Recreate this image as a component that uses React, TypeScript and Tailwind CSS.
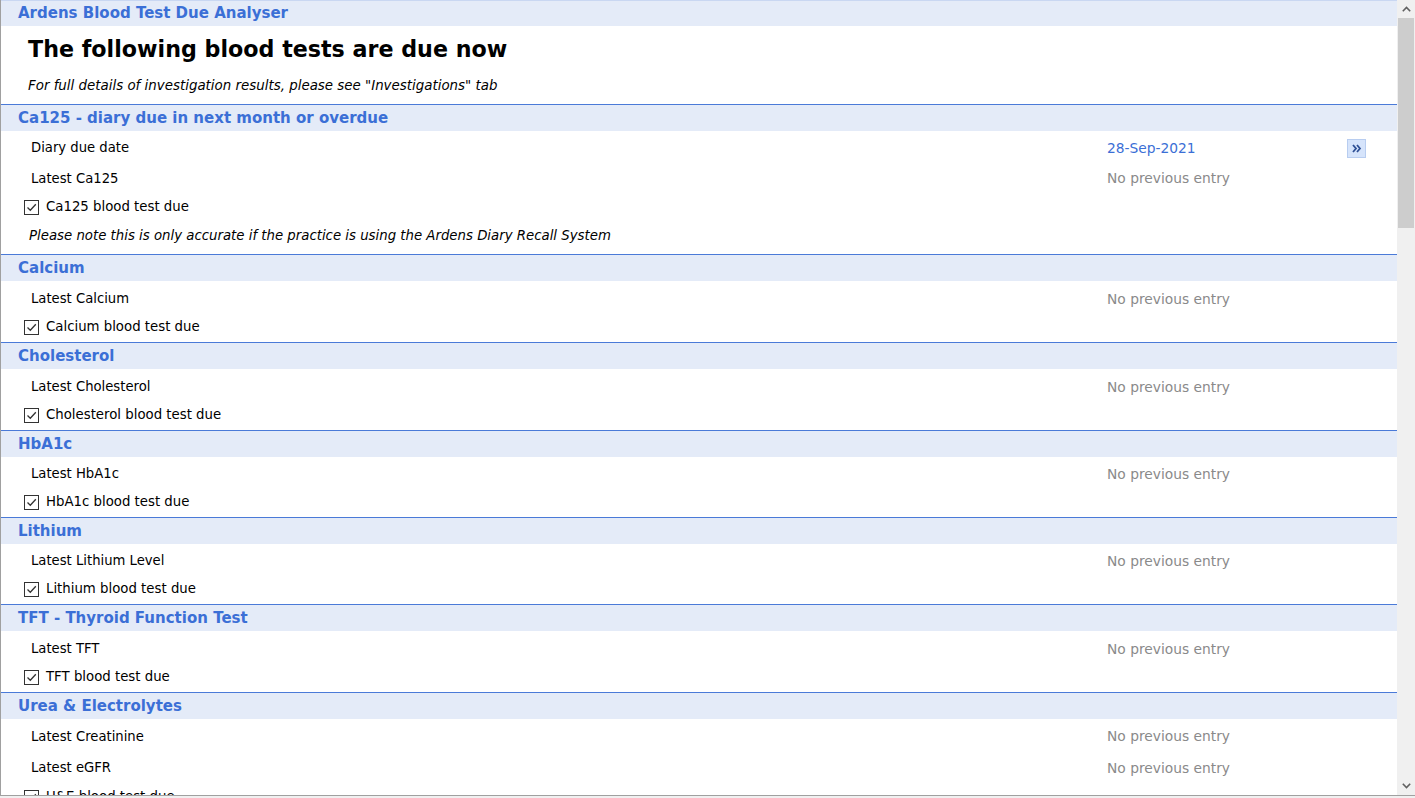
import React from 'react'

// Ardens Blood Test Due Analyser – read-only summary panel

type Row =
  | { kind: 'value'; label: string; value: string; date?: boolean; jump?: boolean; h?: string }
  | { kind: 'check'; label: string }
  | { kind: 'note'; label: string }

const sections: { title: string; pt?: string; rows: Row[] }[] = [
  {
    title: 'Ca125 - diary due in next month or overdue',
    rows: [
      { kind: 'value', label: 'Diary due date', value: '28-Sep-2021', date: true, jump: true },
      { kind: 'value', label: 'Latest Ca125', value: 'No previous entry', h: 'h-[31px]' },
      { kind: 'check', label: 'Ca125 blood test due' },
      { kind: 'note', label: 'Please note this is only accurate if the practice is using the Ardens Diary Recall System' },
    ],
  },
  {
    title: 'Calcium',
    pt: 'pt-[3px]',
    rows: [
      { kind: 'value', label: 'Latest Calcium', value: 'No previous entry' },
      { kind: 'check', label: 'Calcium blood test due' },
    ],
  },
  {
    title: 'Cholesterol',
    pt: 'pt-[3px]',
    rows: [
      { kind: 'value', label: 'Latest Cholesterol', value: 'No previous entry' },
      { kind: 'check', label: 'Cholesterol blood test due' },
    ],
  },
  {
    title: 'HbA1c',
    rows: [
      { kind: 'value', label: 'Latest HbA1c', value: 'No previous entry' },
      { kind: 'check', label: 'HbA1c blood test due' },
    ],
  },
  {
    title: 'Lithium',
    rows: [
      { kind: 'value', label: 'Latest Lithium Level', value: 'No previous entry' },
      { kind: 'check', label: 'Lithium blood test due' },
    ],
  },
  {
    title: 'TFT - Thyroid Function Test',
    pt: 'pt-[3px]',
    rows: [
      { kind: 'value', label: 'Latest TFT', value: 'No previous entry' },
      { kind: 'check', label: 'TFT blood test due' },
    ],
  },
  {
    title: 'Urea & Electrolytes',
    rows: [
      { kind: 'value', label: 'Latest Creatinine', value: 'No previous entry', h: 'h-[31px]' },
      { kind: 'value', label: 'Latest eGFR', value: 'No previous entry', h: 'h-[32px]' },
      { kind: 'check', label: 'U&E blood test due' },
    ],
  },
]

function CheckBox() {
  return (
    <span className="w-[15px] h-[15px] border border-[#333] bg-white flex items-center justify-center shrink-0">
      <svg width="11" height="11" viewBox="0 0 11 11">
        <path d="M1.5 5.5 L4.3 8.3 L9.8 2.3" fill="none" stroke="#333" strokeWidth="1.3" />
      </svg>
    </span>
  )
}

function SectionRow({ r }: { r: Row }) {
  if (r.kind === 'check') {
    return (
      <div className="h-[26px] flex items-center gap-[7px] pl-[23px] text-[13.3px]">
        <CheckBox />
        <span>{r.label}</span>
      </div>
    )
  }
  if (r.kind === 'note') {
    return <div className="h-[32px] flex items-center pl-[28px] italic text-[13.3px]">{r.label}</div>
  }
  return (
    <div className={`${r.h ?? 'h-[30px]'} flex items-center pl-[30px]`}>
      <span className="flex-1">{r.label}</span>
      <span className={`w-[240px] text-[13.8px] ${r.date ? 'text-[#3b6fd6]' : 'text-[#8a8a8a]'}`}>{r.value}</span>
      <span className="w-[50px] flex items-center">
        {r.jump && (
          <span className="w-[19px] h-[19px] bg-[#d6e4fb] border border-[#b8cdf0] flex items-center justify-center">
            <svg width="10" height="9" viewBox="0 0 10 9">
              <path d="M1 1 L4 4.5 L1 8 M5 1 L8 4.5 L5 8" fill="none" stroke="#2e4f95" strokeWidth="1.8" />
            </svg>
          </span>
        )}
      </span>
    </div>
  )
}

export default function App() {
  return (
    <div className="h-[798px] bg-[#f0f0f0] overflow-hidden" style={{ fontFamily: '"DejaVu Sans", Verdana, sans-serif' }}>
      <div className="h-[796px] flex border-l border-b border-[#a0a0a0] bg-white">
        <div className="flex-1 overflow-hidden text-[13.2px] text-black">
          <div className="h-[26px] bg-[#e4ebf8] border-t border-[#c9d7f2] flex items-center pl-[17px] font-bold text-[15px] text-[#3b6fd6]">
            Ardens Blood Test Due Analyser
          </div>
          <div className="pl-[27px] h-[78px]">
            <div className="pt-[8px] h-[46px] font-bold text-[22.2px] leading-[30px]">The following blood tests are due now</div>
            <div className="italic text-[13.4px] leading-[28px]">For full details of investigation results, please see "Investigations" tab</div>
          </div>
          {sections.map(s => (
            <div key={s.title} className="border-t border-[#4a7ad8]">
              <div className="h-[26px] bg-[#e4ebf8] flex items-center pl-[17px] font-bold text-[15px] text-[#3b6fd6]">{s.title}</div>
              <div className={`${s.pt ?? 'pt-[2px]'} pb-[2px]`}>
                {s.rows.map((r, i) => <SectionRow key={i} r={r} />)}
              </div>
            </div>
          ))}
        </div>
        <div className="w-[18px] bg-[#f0f0f0] flex flex-col shrink-0">
          <div className="h-[18px] flex items-center justify-center">
            <svg width="9" height="6" viewBox="0 0 9 6">
              <path d="M0.8 5.2 L4.5 1.5 L8.2 5.2" fill="none" stroke="#606060" strokeWidth="1.6" />
            </svg>
          </div>
          <div className="h-[210px] bg-[#cdcdcd] mx-[1px]" />
          <div className="flex-1" />
          <div className="h-[18px] flex items-center justify-center">
            <svg width="9" height="6" viewBox="0 0 9 6">
              <path d="M0.8 0.8 L4.5 4.5 L8.2 0.8" fill="none" stroke="#606060" strokeWidth="1.6" />
            </svg>
          </div>
        </div>
      </div>
    </div>
  )
}
